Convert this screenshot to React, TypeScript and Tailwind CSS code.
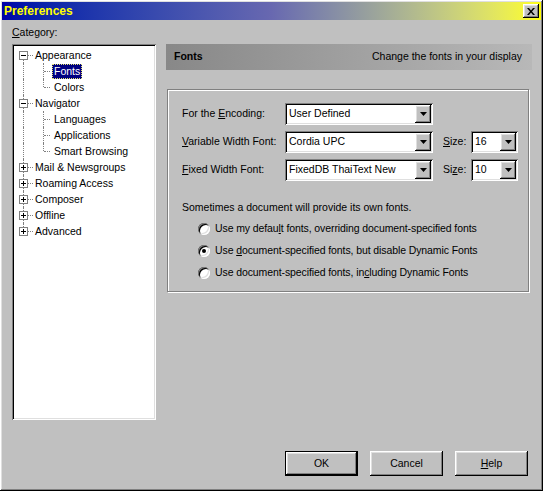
import type { ReactNode } from "react";

const raised =
  "shadow-[inset_-1px_-1px_#000,inset_1px_1px_#fff,inset_-2px_-2px_#808080,inset_2px_2px_#dfdfdf]";
const sunken =
  "shadow-[inset_1px_1px_#808080,inset_-1px_-1px_#fff,inset_2px_2px_#000,inset_-2px_-2px_#dfdfdf]";

type Node = { label: string; level: 0 | 1; box?: "+" | "-"; last?: boolean; selected?: boolean };

const tree: Node[] = [
  { label: "Appearance", level: 0, box: "-" },
  { label: "Fonts", level: 1, selected: true },
  { label: "Colors", level: 1, last: true },
  { label: "Navigator", level: 0, box: "-" },
  { label: "Languages", level: 1 },
  { label: "Applications", level: 1 },
  { label: "Smart Browsing", level: 1, last: true },
  { label: "Mail & Newsgroups", level: 0, box: "+" },
  { label: "Roaming Access", level: 0, box: "+" },
  { label: "Composer", level: 0, box: "+" },
  { label: "Offline", level: 0, box: "+" },
  { label: "Advanced", level: 0, box: "+" },
];

function U({ children }: { children: ReactNode }) {
  return <span className="underline underline-offset-[1px]">{children}</span>;
}

function TreeRow({ node, first, lastRoot }: { node: Node; first: boolean; lastRoot: boolean }) {
  return (
    <div className="relative flex h-[16px] items-center">
      {/* root line */}
      <div
        className={
          "absolute left-[9px] w-0 border-l border-dotted border-[#808080] " +
          (first ? "top-[8px] bottom-0" : lastRoot ? "top-0 h-[8px]" : "top-0 bottom-0")
        }
      />
      {node.level === 0 ? (
        <>
          <div className="absolute left-[14px] top-[8px] w-[5px] border-t border-dotted border-[#808080]" />
          <div className="absolute left-[5px] top-[4px] flex h-[9px] w-[9px] items-center justify-center border border-[#808080] bg-white">
            <div className="relative h-[1px] w-[5px] bg-black">
              {node.box === "+" && <div className="absolute left-[2px] top-[-2px] h-[5px] w-[1px] bg-black" />}
            </div>
          </div>
          <span className="ml-[19px] px-[2px] leading-[13px]">{node.label}</span>
        </>
      ) : (
        <>
          <div
            className={
              "absolute left-[29px] w-0 border-l border-dotted border-[#808080] " +
              (node.last ? "top-0 h-[8px]" : "top-0 bottom-0")
            }
          />
          <div className="absolute left-[30px] top-[8px] w-[6px] border-t border-dotted border-[#808080]" />
          <span
            className={
              "ml-[38px] px-[1px] leading-[13px] " +
              (node.selected
                ? "border border-dotted border-[#e8e870] bg-[#000080] text-white"
                : "border border-transparent")
            }
          >
            {node.label}
          </span>
        </>
      )}
    </div>
  );
}

function Combo({ value, width }: { value: string; width: string }) {
  return (
    <div className={`flex h-[22px] items-center bg-white p-[2px] ${sunken} ${width}`}>
      <span className="flex-1 truncate pl-[2px]">{value}</span>
      <div className={`flex h-full w-[16px] items-center justify-center bg-[#c0c0c0] ${raised}`}>
        <svg width="7" height="4" viewBox="0 0 7 4">
          <path d="M0 0h7L3.5 4z" fill="#000" />
        </svg>
      </div>
    </div>
  );
}

function Radio({ checked, children }: { checked?: boolean; children: ReactNode }) {
  return (
    <div className="flex h-[22px] items-center pl-[16px]">
      <div className={`flex h-[12px] w-[12px] items-center justify-center rounded-full bg-white ${sunken}`}>
        {checked && <div className="h-[4px] w-[4px] rounded-full bg-black" />}
      </div>
      <span className="ml-[5px] tracking-[-0.1px]">{children}</span>
    </div>
  );
}

function Button({ children, isDefault }: { children: ReactNode; isDefault?: boolean }) {
  return isDefault ? (
    <div className="h-[25px] w-[73px] border border-black">
      <div className={`flex h-full w-full items-center justify-center ${raised}`}>{children}</div>
    </div>
  ) : (
    <div className={`flex h-[25px] w-[73px] items-center justify-center ${raised}`}>{children}</div>
  );
}

export default function App() {
  return (
    <div
      className={`flex h-[491px] w-[543px] flex-col bg-[#c0c0c0] p-[2px] text-[10.5px] text-black ${raised}`}
      style={{ fontFamily: '"Liberation Sans", Arial, sans-serif' }}
    >
      <div className="flex h-[18px] items-center justify-between bg-linear-to-r from-[#0000a8] via-[#6868b0] to-[#ffff00] pl-[2px] pr-[2px]">
        <span className="text-[12px] font-bold text-[#ffff00]">Preferences</span>
        <div className={`flex h-[14px] w-[16px] items-center justify-center bg-[#c0c0c0] ${raised}`}>
          <svg width="8" height="7" viewBox="0 0 8 7">
            <path d="M0 0h2l2 2.5L6 0h2L5 3.5 8 7H6L4 4.5 2 7H0l3-3.5z" fill="#000" />
          </svg>
        </div>
      </div>

      <div className="flex pl-[10px]">
        <div className="flex flex-col">
          <div className="mt-[6px] h-[13px] leading-[13px]">
            <U>C</U>ategory:
          </div>
          <div className={`mt-[5px] h-[376px] w-[144px] bg-white p-[2px] pt-[3px] ${sunken}`}>
            {tree.map((node, i) => (
              <TreeRow key={node.label} node={node} first={i === 0} lastRoot={i === tree.length - 1} />
            ))}
          </div>
        </div>

        <div className="ml-[10px] mt-[24px] flex w-[366px] flex-col">
          <div className="flex h-[26px] items-center justify-between bg-linear-to-r from-[#888888] to-[#b8b8b8] pl-[8px] pr-[10px]">
            <span className="font-bold">Fonts</span>
            <span>Change the fonts in your display</span>
          </div>

          <div className="ml-[1px] mt-[19px] h-[203px] w-[362px] border border-[#808080] pl-[14px] pt-[13px] shadow-[inset_1px_1px_#fff,1px_1px_#fff]">
            <div className="flex flex-col gap-[6px]">
              <div className="flex items-center">
                <span className="w-[103px]">
                  For the <U>E</U>ncoding:
                </span>
                <Combo value="User Defined" width="w-[148px]" />
              </div>
              <div className="flex items-center">
                <span className="w-[103px]">
                  <U>V</U>ariable Width Font:
                </span>
                <Combo value="Cordia UPC" width="w-[148px]" />
                <span className="ml-[10px] w-[28px]">
                  <U>S</U>ize:
                </span>
                <Combo value="16" width="w-[47px]" />
              </div>
              <div className="flex items-center">
                <span className="w-[103px]">
                  <U>F</U>ixed Width Font:
                </span>
                <Combo value="FixedDB ThaiText New" width="w-[148px]" />
                <span className="ml-[10px] w-[28px]">
                  Si<U>z</U>e:
                </span>
                <Combo value="10" width="w-[47px]" />
              </div>
            </div>

            <div className="mt-[20px] leading-[13px]">Sometimes a document will provide its own fonts.</div>
            <div className="mt-[4px] flex flex-col">
              <Radio>
                Use my defau<U>l</U>t fonts, overriding document-specified fonts
              </Radio>
              <Radio checked>
                Use <U>d</U>ocument-specified fonts, but disable Dynamic Fonts
              </Radio>
              <Radio>
                Use document-specified fonts, in<U>c</U>luding Dynamic Fonts
              </Radio>
            </div>
          </div>
        </div>
      </div>

      <div className="mt-[31px] flex justify-end gap-[12px] pr-[13px]">
        <Button isDefault>OK</Button>
        <Button>Cancel</Button>
        <Button>
          <U>H</U>elp
        </Button>
      </div>
    </div>
  );
}
